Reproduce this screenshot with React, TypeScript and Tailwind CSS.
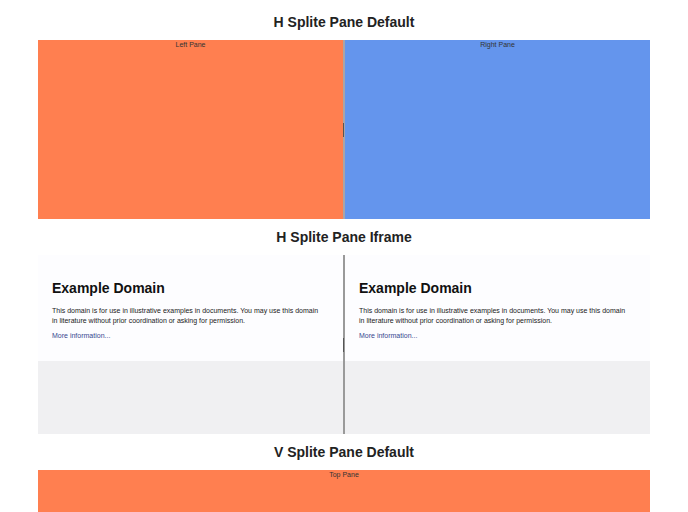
import React from "react";

function Divider({ light }: { light?: boolean }) {
  return (
    <div
      className={
        "relative w-[2px] shrink-0 flex items-center " +
        (light ? "bg-[#a9a5a8]" : "bg-[#9a9a9a]")
      }
    >
      <div className="w-[1px] h-[14px] bg-[#555555]" />
    </div>
  );
}

function ExampleCard() {
  return (
    <div className="flex-1 bg-[#f0f0f2] h-full">
      <div className="bg-[#fdfdff] pt-[24px] px-[14px] pb-[21px] text-[7px] text-[#1a1a1a]">
        <h1 className="text-[14px] leading-[18px] font-bold text-[#111]">Example Domain</h1>
        <p className="mt-[9px] leading-[9.5px]">
          This domain is for use in illustrative examples in documents. You may use this domain
          <br />
          in literature without prior coordination or asking for permission.
        </p>
        <p className="mt-[6px] leading-[9px] text-[#38488f]">More information...</p>
      </div>
    </div>
  );
}

export default function App() {
  return (
    <div className="bg-white px-[38px] font-['Liberation_Sans',Arial,sans-serif] text-[#222] h-[512px] overflow-hidden">
      <div className="pt-[4px]">
        <h2 className="h-[36px] flex items-center justify-center text-[14px] font-bold text-[#222]">
          H Splite Pane Default
        </h2>
      </div>
      <div className="flex h-[179px]">
        <div className="flex-1 bg-[#ff7f50] text-center text-[7px] leading-[9px] text-[#333]">Left Pane</div>
        <Divider light />
        <div className="flex-1 bg-[#6495ed] text-center text-[7px] leading-[9px] text-[#333]">Right Pane</div>
      </div>
      <h2 className="h-[36px] flex items-center justify-center text-[14px] font-bold text-[#222]">
        H Splite Pane Iframe
      </h2>
      <div className="flex h-[179px]">
        <ExampleCard />
        <Divider />
        <ExampleCard />
      </div>
      <h2 className="h-[36px] flex items-center justify-center text-[14px] font-bold text-[#222]">
        V Splite Pane Default
      </h2>
      <div className="h-[179px] bg-[#ff7f50] text-center text-[7px] leading-[9px] text-[#333]">Top Pane</div>
    </div>
  );
}
